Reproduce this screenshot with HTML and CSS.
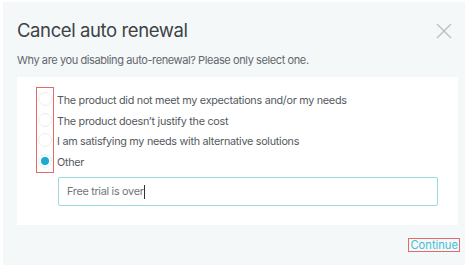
FILE: index.html
```html
<!DOCTYPE html>
<html>
<head>
<meta charset="utf-8">
<link rel="stylesheet" href="styles.css">
</head>
<body>
<div class="dialog">
  <div class="header">
    <h1 class="title">Cancel auto renewal</h1>
    <svg class="close" width="16" height="16" viewBox="0 0 16 16"><path d="M1 1L15 15M15 1L1 15" stroke="#b9bcbe" stroke-width="1.2" fill="none"/></svg>
  </div>
  <p class="subtitle">Why are you disabling auto-renewal? Please only select one.</p>
  <div class="panel">
    <div class="options">
      <div class="radios">
        <span class="radio"></span>
        <span class="radio"></span>
        <span class="radio"></span>
        <span class="radio checked"></span>
      </div>
      <div class="labels">
        <span class="label">The product did not meet my expectations and/or my needs</span>
        <span class="label">The product doesn’t justify the cost</span>
        <span class="label">I am satisfying my needs with alternative solutions</span>
        <span class="label">Other</span>
      </div>
    </div>
    <div class="input">Free trial is over<span class="caret"></span></div>
  </div>
  <div class="footer">
    <span class="continue">Continue</span>
  </div>
</div>
</body>
</html>
```
FILE: styles.css
```css
html, body { margin: 0; padding: 0; background: #fff; }
body { font-family: Inter, "Noto Sans", sans-serif; }
.dialog {
  margin: 2px 0 0 3px;
  width: 441px;
  height: 263px;
  background: #f5f8f9;
  padding: 0 7px 0 14px;
  box-sizing: content-box;
  display: flex;
  flex-direction: column;
}
.header {
  display: flex;
  justify-content: space-between;
  align-items: flex-start;
  padding-top: 16px;
}
.title {
  margin: 0;
  font-size: 18.5px;
  font-weight: 400;
  color: #3d4246;
  line-height: 24px;
  letter-spacing: -0.4px;
}
.close { margin: 5px 6px 0 0; }
.subtitle {
  margin: 11px 0 0 0;
  font-size: 11px;
  color: #62676b;
  line-height: 14px;
  letter-spacing: -0.4px;
}
.panel {
  margin-top: 10px;
  background: #fff;
  padding: 10px 20px 18px 19px;
  height: 148px;
  box-sizing: border-box;
}
.options { display: flex; gap: 3px; }
.radios {
  display: flex;
  flex-direction: column;
  border: 1.5px solid #e46a6a;
  padding: 4px 1px 3px 1px;
  gap: 6.5px;
}
.radio {
  width: 14px;
  height: 14px;
  border-radius: 50%;
  border: 1px solid #ededed;
  box-sizing: border-box;
  background: #fff;
  display: flex;
  align-items: center;
  justify-content: center;
}
.radio.checked { border-color: #dff3f7; }
.radio.checked::after {
  content: "";
  width: 8px;
  height: 8px;
  border-radius: 50%;
  background: #17acd0;
}
.labels {
  display: flex;
  flex-direction: column;
  padding-top: 4px;
}
.label {
  font-size: 10.8px;
  line-height: 20.5px;
  color: #55595d;
  letter-spacing: -0.28px;
}
.input {
  margin: 4px 0 0 22px;
  height: 29px;
  box-sizing: border-box;
  border: 1.5px solid #9adbe3;
  border-radius: 2px;
  padding: 0 8px;
  display: flex;
  align-items: center;
  font-size: 10.8px;
  letter-spacing: -0.28px;
  color: #6f7478;
}
.caret {
  display: inline-block;
  width: 1px;
  height: 14px;
  background: #333;
  margin-left: 1px;
}
.footer {
  display: flex;
  justify-content: flex-end;
  margin-top: 13px;
  margin-right: -2px;
}
.continue {
  font-size: 11.2px;
  color: #3fc0d6;
  border: 1.5px solid #e46a6a;
  padding: 0 1px;
  line-height: 12px;
}
```
